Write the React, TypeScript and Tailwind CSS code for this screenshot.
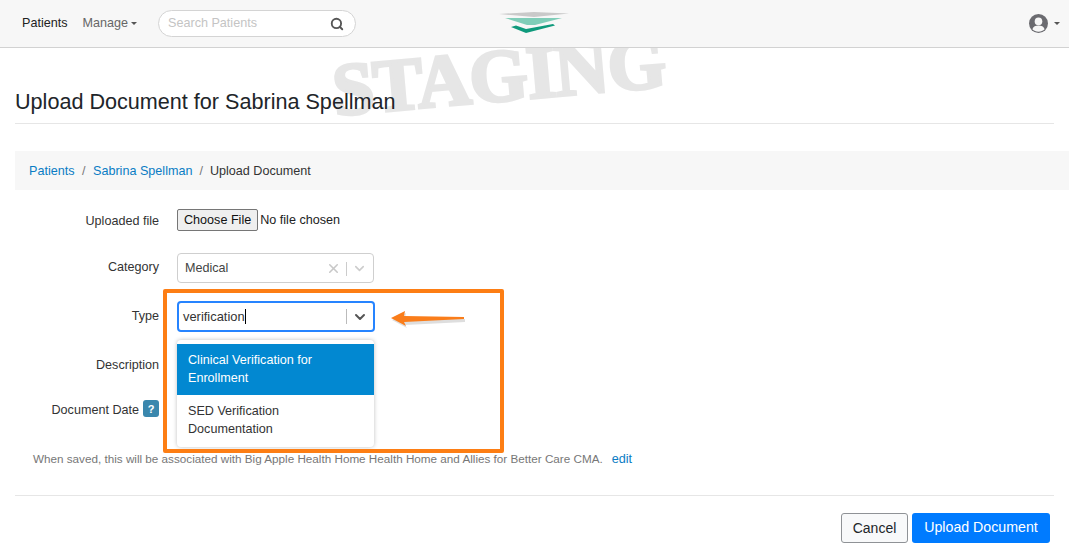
import { ChevronDown, Search, X } from "lucide-react";

function Caret() {
    return <span className="ml-[3px] inline-block border-x-[3px] border-t-[3px] border-x-transparent border-t-[#555]" />;
}

function Logo() {
    return (
        <svg width="72" height="24" viewBox="0 0 72 24" className="block">
            <polygon points="0,3 35,1 70,2.500 35,6" fill="#c9c9c9" />
            <polygon points="6,7 63,7 36,14 28,14" fill="#7fcdb8" />
            <polygon points="12,16 17,14.500 27,18 54,13 56,14.500 27,22" fill="#0f9a7c" />
        </svg>
    );
}

function UserIcon() {
    return (
        <svg width="19" height="19" viewBox="0 0 18 18" className="block">
            <circle cx="9" cy="9" r="9" fill="#6b6b70" />
            <circle cx="9" cy="7" r="3.6" fill="#f7f7f7" />
            <path d="M3.2 14.5c.8-2.800 3-3.600 5.800-3.600s5 .8 5.800 3.600C13.400 16 11.400 16.800 9 16.800s-4.400-.8-5.800-2.300z" fill="#f7f7f7" />
        </svg>
    );
}

function Row({ label, className, children }: { label: React.ReactNode; className: string; children?: React.ReactNode }) {
    return (
        <div className={`flex items-center ${className}`}>
            <div className="w-[144px] shrink-0 text-right text-[12.6px] text-[#333]">{label}</div>
            <div className="ml-[18px]">{children}</div>
        </div>
    );
}

export default function App() {
    return (
        <div className="relative h-[557px] w-[1069px] overflow-hidden bg-white font-['Liberation_Sans',Arial,sans-serif] text-[12.6px] text-[#212529]">
            {/* watermark sits behind the navbar */}
            <div className="absolute left-[332px] top-[32px] origin-center rotate-[-5deg] font-['Liberation_Serif',serif] text-[75px] font-bold leading-[88px] tracking-[-1px] text-[#e6e6e6] select-none [-webkit-text-stroke:3px_#e6e6e6]">
                STAGING
            </div>

            <nav className="relative flex h-[48px] items-center border-b border-[#d2d2d2] bg-[#f7f7f7] pl-[22px] pr-[9px]">
                <span className="text-[#222]">Patients</span>
                <span className="ml-[15px] flex items-center text-[#666]">
                    Manage
                    <Caret />
                </span>
                <div className="ml-[21px] flex h-[27px] w-[198px] items-center justify-between rounded-full border border-[#d4d4d4] bg-white pl-[9px] pr-[11px]">
                    <span className="text-[#c4c4c4]">Search Patients</span>
                    <Search size={14} strokeWidth={3.2} className="text-[#555]" />
                </div>
                <div className="absolute left-[499px] top-[11px]">
                    <Logo />
                </div>
                <div className="ml-auto flex items-center">
                    <UserIcon />
                    <span className="ml-[3px] flex">
                        <Caret />
                    </span>
                </div>
            </nav>

            <main className="relative px-[15px]">
                <h1 className="mt-[40px] text-[21.6px] font-normal leading-[28px] text-[#212529]">
                    Upload Document for Sabrina Spellman
                </h1>
                <div className="mt-[7px] h-px bg-[#e6e6e6]" />

                <div className="mr-[-15px] mt-[27px] flex h-[39px] items-center bg-[#f7f7f7] px-[14px] pt-[1px]">
                    <a className="text-[#0a7cc4]">Patients</a>
                    <span className="mx-[7.5px] text-[#777]">/</span>
                    <a className="text-[#0a7cc4]">Sabrina Spellman</a>
                    <span className="mx-[7px] text-[#777]">/</span>
                    <span className="text-[#333]">Upload Document</span>
                </div>

                <Row label={<span className="relative top-[1px]">Uploaded file</span>} className="mt-[19px] h-[22px]">
                    <div className="flex items-center">
                        <span className="mt-[-1px] flex h-[22px] items-center rounded-[2px] border border-[#767676] bg-[#efefef] px-[6px] pt-[1px] text-[#111]">
                            Choose File
                        </span>
                        <span className="ml-[2px] text-[#222]">No file chosen</span>
                    </div>
                </Row>

                <Row label="Category" className="mt-[21px] h-[30px]">
                    <div className="mt-[2px] flex h-[30px] w-[197px] items-center rounded-[4px] border border-[#cfcfcf] bg-white pl-[7px] pr-[6px] pt-[1px]">
                        <span className="flex-1 text-[#444]">Medical</span>
                        <X size={15} strokeWidth={2.5} className="text-[#c8c8c8]" />
                        <span className="mx-[5px] h-[14px] w-px bg-[#ccc]" />
                        <ChevronDown size={15} strokeWidth={2.5} className="text-[#cccccc]" />
                    </div>
                </Row>

                <Row label={<span className="relative top-[1px]">Type</span>} className="mt-[18px] h-[31px]">
                    <div className="mt-[2px] flex h-[31px] w-[198px] items-center rounded-[4px] border-2 border-[#2684ff] bg-white pl-[4px] pr-[5px]">
                        <span className="flex-1 text-[12.9px] text-[#333]">
                            verification<span className="border-r border-black" />
                        </span>
                        <span className="mx-[5px] h-[15px] w-px bg-[#bbb]" />
                        <ChevronDown size={16} strokeWidth={3} className="text-[#555]" />
                    </div>
                </Row>

                <Row label="Description" className="mt-[24px] h-[20px]" />

                <Row
                    label={
                        <span className="flex items-center justify-end">
                            <span className="relative top-[1px]">Document Date</span>
                            <span className="ml-[4px] flex h-[17px] w-[16px] items-center justify-center rounded-[3px] bg-[#3a87ad] text-[11px] font-bold text-white">
                                ?
                            </span>
                        </span>
                    }
                    className="mt-[24px] h-[20px]"
                />

                <p className="mt-[32px] pl-[18px] text-[11.7px] leading-[16px] text-[#777]">
                    When saved, this will be associated with Big Apple Health Home Health Home and Allies for Better Care CMA.
                    <a className="ml-[9px] text-[12.6px] text-[#0a7cc4]">edit</a>
                </p>

                <div className="mt-[28px] h-px bg-[#e6e6e6]" />

                <div className="mt-[17px] flex justify-end gap-[4px] pr-[4px]">
                    <button className="h-[30px] w-[67px] rounded-[3px] border border-[#8f9296] bg-[#f8f9fa] text-[14px] text-[#212529]">
                        Cancel
                    </button>
                    <button className="h-[30px] w-[138px] rounded-[3px] bg-[#007bff] text-[14.2px] text-white">
                        Upload Document
                    </button>
                </div>
            </main>

            {/* open select menu over the form */}
            <div className="absolute left-[177px] top-[340px] w-[197px] overflow-hidden rounded-[4px] bg-white pt-[4px] text-[12.6px] leading-[18px] shadow-[0_0_4px_rgba(0,0,0,0.25)]">
                <div className="h-[51px] bg-[#0288d1] px-[11px] py-[7px] font-medium text-white">
                    Clinical Verification for Enrollment
                </div>
                <div className="h-[52px] px-[11px] py-[7px] text-[#333]">SED Verification Documentation</div>
            </div>

            {/* annotation added on the screenshot */}
            <div className="absolute left-[163px] top-[289px] h-[164px] w-[341px] rounded-[2px] border-[4px] border-[#fd7e14]" />
            <svg width="80" height="24" viewBox="0 0 80 24" className="absolute left-[388px] top-[306px]">
                <polygon points="3,12 17,5 16,10 76,11 76,14 16,17 18,20" fill="#a0a0a0" opacity="0.35" transform="translate(1,2)" />
                <polygon points="3,12 17,5 16,10 76,11 76,13 16,16 18,20" fill="#fa7d1a" />
            </svg>
        </div>
    );
}
